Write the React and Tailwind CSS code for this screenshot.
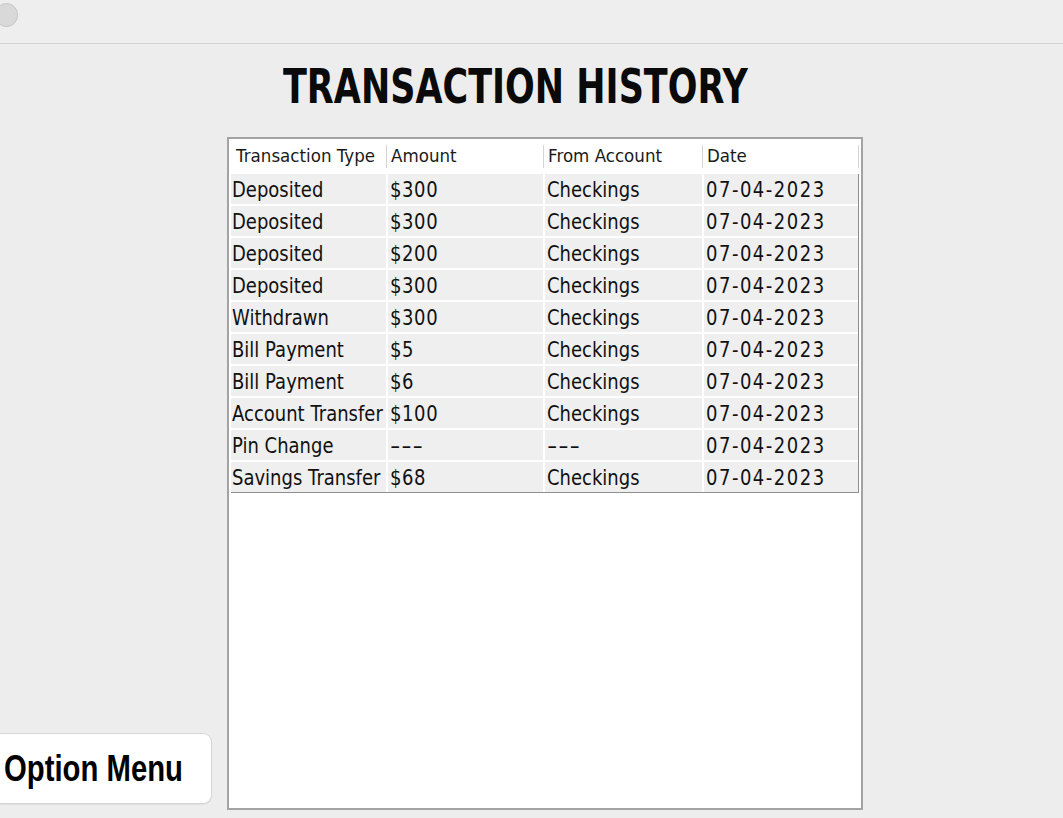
import React from "react";

const rows = [
  ["Deposited", "$300", "Checkings", "07-04-2023"],
  ["Deposited", "$300", "Checkings", "07-04-2023"],
  ["Deposited", "$200", "Checkings", "07-04-2023"],
  ["Deposited", "$300", "Checkings", "07-04-2023"],
  ["Withdrawn", "$300", "Checkings", "07-04-2023"],
  ["Bill Payment", "$5", "Checkings", "07-04-2023"],
  ["Bill Payment", "$6", "Checkings", "07-04-2023"],
  ["Account Transfer", "$100", "Checkings", "07-04-2023"],
  ["Pin Change", "---", "---", "07-04-2023"],
  ["Savings Transfer", "$68", "Checkings", "07-04-2023"],
];

const headers = ["Transaction Type", "Amount", "From Account", "Date"];

function Dash({ v, normal }) {
  if (v === "---") {
    return (
      <span className="inline-block scale-y-[1.17] scale-x-[1.6] origin-left tracking-[0.5px]">{v}</span>
    );
  }
  return <span className={"inline-block scale-y-[1.17] " + normal}>{v}</span>;
}

export default function App() {
  return (
    <div className="w-[1063px] h-[818px] bg-[#ededed] overflow-hidden flex flex-col font-['DejaVu_Sans',sans-serif] text-[#111]">
      {/* title bar */}
      <div className="h-[44px] shrink-0 border-b border-[#d2d2d2] bg-[#eeeeee] flex items-start">
        <div className="mt-[3px] ml-[-5px] w-[23px] h-[24px] rounded-full bg-[#d9d9d9] border border-[#c6c6c6]" />
      </div>

      {/* title */}
      <div className="h-[93px] shrink-0 pl-[283px] pt-[22px]">
        <span className="inline-block font-bold text-[35px] leading-[40px] scale-y-[1.38] origin-center text-[#0a0a0a]">
          TRANSACTION HISTORY
        </span>
      </div>

      {/* body */}
      <div className="flex items-end">
        <button className="mb-[6px] w-[212px] h-[71px] bg-white rounded-r-[9px] border border-l-0 border-[#d6d6d6] flex items-center pl-[4px] shadow-[0_1px_1px_rgba(0,0,0,0.06)]">
          <span className="inline-block font-['Liberation_Sans',Arial,sans-serif] font-bold text-[29.3px] leading-none scale-y-[1.24] text-black">
            Option Menu
          </span>
        </button>

        <div className="ml-[15px] w-[636px] h-[673px] bg-white border-2 border-[#a3a3a3] px-[2px]">
          {/* header */}
          <div className="grid grid-cols-[155px_157px_159px_157px] h-[35px] bg-white">
            {headers.map((h, i) => (
              <div
                key={h}
                className="relative flex items-center pl-[5px] text-[16.7px] text-[#1a1a1a]"
              >
                {i > 0 && (
                  <div className="absolute left-0 top-[6px] bottom-[6px] w-px bg-[#d4d4d4]" />
                )}
                {i === 3 && (
                  <div className="absolute right-0 top-[6px] bottom-[6px] w-px bg-[#d4d4d4]" />
                )}
                <span className="inline-block scale-y-[1.06]">{h}</span>
              </div>
            ))}
          </div>
          {/* rows */}
          <div className="border-r border-b border-[#8e8e8e] w-[628px]">
            {rows.map((r, ri) => (
              <div
                key={ri}
                className="grid grid-cols-[155px_157px_159px_156px] h-[32px] border-t-2 border-white first:border-t-0 first:h-[30px]"
              >
                <div className="bg-[#efefef] flex items-center pl-[1px] text-[18px]">
                  <span className="inline-block scale-y-[1.17] whitespace-nowrap">{r[0]}</span>
                </div>
                <div className="bg-[#efefef] border-l-2 border-white flex items-center pl-[2px] text-[18px]">
                  <Dash v={r[1]} normal="tracking-[0.6px]" />
                </div>
                <div className="bg-[#efefef] border-l-2 border-white flex items-center pl-[2px] text-[18px]">
                  <Dash v={r[2]} normal="" />
                </div>
                <div className="bg-[#efefef] border-l-2 border-white flex items-center pl-[2px] text-[18px]">
                  <span className="inline-block scale-y-[1.17] tracking-[1.5px]">{r[3]}</span>
                </div>
              </div>
            ))}
          </div>
        </div>
      </div>
    </div>
  );
}
